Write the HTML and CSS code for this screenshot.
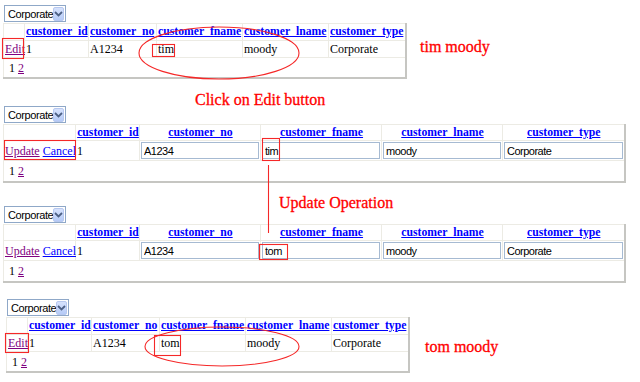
FILE: index.html
```html
<!DOCTYPE html>
<html>
<head>
<meta charset="utf-8">
<link rel="stylesheet" href="styles.css">
</head>
<body>
<div class="page">

  <div class="shot s1">
    <div class="combo"><span class="combo-text">Corporate</span><span class="combo-btn"><svg width="9" height="6" viewBox="0 0 9 6"><path d="M1 1 L4.5 4.5 L8 1" fill="none" stroke="#4d6185" stroke-width="1.8"/></svg></span></div>
    <table class="grid compact">
      <colgroup><col class="w-a"><col class="w-b"><col class="w-c"><col class="w-d"><col class="w-e"><col class="w-f"></colgroup>
      <tr class="head"><th></th><th><a href="#">customer_id</a></th><th><a href="#">customer_no</a></th><th><a href="#">customer_fname</a></th><th><a href="#">customer_lname</a></th><th><a href="#">customer_type</a></th></tr>
      <tr class="data"><td><a class="visited" href="#">Edit</a></td><td>1</td><td>A1234</td><td>tim</td><td>moody</td><td>Corporate</td></tr>
      <tr class="pager"><td colspan="6">1 <a class="visited" href="#">2</a></td></tr>
    </table>
  </div>

  <div class="shot s2">
    <div class="combo"><span class="combo-text">Corporate</span><span class="combo-btn"><svg width="9" height="6" viewBox="0 0 9 6"><path d="M1 1 L4.5 4.5 L8 1" fill="none" stroke="#4d6185" stroke-width="1.8"/></svg></span></div>
    <table class="grid wide">
      <colgroup><col class="w-a"><col class="w-b"><col class="w-c"><col class="w-d"><col class="w-e"><col class="w-f"></colgroup>
      <tr class="head"><th></th><th><a href="#">customer_id</a></th><th><a href="#">customer_no</a></th><th><a href="#">customer_fname</a></th><th><a href="#">customer_lname</a></th><th><a href="#">customer_type</a></th></tr>
      <tr class="data"><td><a class="visited" href="#">Update</a> <a href="#">Cancel</a></td><td>1</td><td><input class="field" value="A1234"></td><td><input class="field" value="tim"></td><td><input class="field" value="moody"></td><td><input class="field" value="Corporate"></td></tr>
      <tr class="pager"><td colspan="6">1 <a class="visited" href="#">2</a></td></tr>
    </table>
  </div>

  <div class="shot s3">
    <div class="combo"><span class="combo-text">Corporate</span><span class="combo-btn"><svg width="9" height="6" viewBox="0 0 9 6"><path d="M1 1 L4.5 4.5 L8 1" fill="none" stroke="#4d6185" stroke-width="1.8"/></svg></span></div>
    <table class="grid wide">
      <colgroup><col class="w-a"><col class="w-b"><col class="w-c"><col class="w-d"><col class="w-e"><col class="w-f"></colgroup>
      <tr class="head"><th></th><th><a href="#">customer_id</a></th><th><a href="#">customer_no</a></th><th><a href="#">customer_fname</a></th><th><a href="#">customer_lname</a></th><th><a href="#">customer_type</a></th></tr>
      <tr class="data"><td><a class="visited" href="#">Update</a> <a href="#">Cancel</a></td><td>1</td><td><input class="field" value="A1234"></td><td><input class="field" value="tom"></td><td><input class="field" value="moody"></td><td><input class="field" value="Corporate"></td></tr>
      <tr class="pager"><td colspan="6">1 <a class="visited" href="#">2</a></td></tr>
    </table>
  </div>

  <div class="shot s4">
    <div class="combo"><span class="combo-text">Corporate</span><span class="combo-btn"><svg width="9" height="6" viewBox="0 0 9 6"><path d="M1 1 L4.5 4.5 L8 1" fill="none" stroke="#4d6185" stroke-width="1.8"/></svg></span></div>
    <table class="grid compact">
      <colgroup><col class="w-a"><col class="w-b"><col class="w-c"><col class="w-d"><col class="w-e"><col class="w-f"></colgroup>
      <tr class="head"><th></th><th><a href="#">customer_id</a></th><th><a href="#">customer_no</a></th><th><a href="#">customer_fname</a></th><th><a href="#">customer_lname</a></th><th><a href="#">customer_type</a></th></tr>
      <tr class="data"><td><a class="visited" href="#">Edit</a></td><td>1</td><td>A1234</td><td>tom</td><td>moody</td><td>Corporate</td></tr>
      <tr class="pager"><td colspan="6">1 <a class="visited" href="#">2</a></td></tr>
    </table>
  </div>

  <svg class="marks" width="640" height="382" viewBox="0 0 640 382">
    <g fill="none" stroke="#f52828" stroke-width="1.1">
      <ellipse cx="219" cy="53" rx="80" ry="26"/>
      <rect x="2.5" y="38.5" width="21" height="20"/>
      <rect x="152.5" y="44.5" width="22" height="12"/>
      <rect x="4.5" y="140.5" width="71" height="19"/>
      <rect x="262.5" y="138.5" width="17" height="22"/>
      <line x1="268.5" y1="165" x2="268.5" y2="233"/>
      <rect x="259.5" y="244.5" width="28" height="15"/>
      <ellipse cx="222" cy="346.5" rx="77" ry="19.5"/>
      <rect x="5.5" y="333.5" width="23" height="19"/>
      <rect x="154.5" y="335.5" width="26" height="20"/>
    </g>
  </svg>

  <div class="note n-tim">tim moody</div>
  <div class="note n-click">Click on Edit button</div>
  <div class="note n-update">Update Operation</div>
  <div class="note n-tom">tom moody</div>
</div>
</body>
</html>
```

FILE: styles.css
```css
html, body {
  margin: 0;
  padding: 0;
  background: #ffffff;
}

.page {
  position: relative;
  width: 640px;
  height: 382px;
  overflow: hidden;
  font-family: "Liberation Serif", "Times New Roman", serif;
  font-size: 12px;
  color: #000;
}

.shot {
  margin-left: 3px;
}
.s1 { padding-top: 5px; }
.s2 { margin-top: 27px; }
.s3 { margin-top: 23px; }
.s4 { margin-top: 16px; margin-left: 6px; }

.combo {
  margin-left: 1px;
  margin-bottom: 1px;
  width: 62px;
  height: 17px;
  box-sizing: border-box;
  border: 1px solid #8fa8c8;
  background: #fff;
  display: flex;
  align-items: center;
  justify-content: space-between;
  font-family: "Liberation Sans", Arial, sans-serif;
  font-size: 11px;
  letter-spacing: -0.4px;
  padding-left: 3px;
}

.combo-btn {
  width: 13px;
  height: 14px;
  margin-right: 1px;
  box-sizing: border-box;
  border: 1px solid #b7c8ef;
  border-radius: 2px;
  background: linear-gradient(#d6e2fd, #b6cbf7);
  display: flex;
  align-items: center;
  justify-content: center;
}

.grid {
  border-collapse: collapse;
  table-layout: fixed;
  border-top: 1px solid #dcdad2;
  border-left: 1px solid #dcdad2;
  border-right: 2px solid #c6c6c2;
  border-bottom: 2px solid #c6c6c2;
  background: #fff;
}
.grid td, .grid th {
  border: 1px solid #ecebe4;
  padding: 0 1px;
  white-space: nowrap;
  line-height: 14px;
}
.grid th {
  font-weight: bold;
  font-size: 11.7px;
  padding: 0 0 0 1px;
  overflow: hidden;
}
.grid th a, .grid td a {
  color: #0000ff;
  text-decoration: underline;
}
.grid a.visited {
  color: #800080;
}

.compact { width: 403px; }
.compact th { text-align: left; height: 16px; }
.compact .data td { height: 16px; }
.compact .pager td { height: 19px; }
.compact .w-a { width: 21px; }
.compact .w-b { width: 64px; }
.compact .w-c { width: 68px; }
.compact .w-d { width: 86px; }
.compact .w-e { width: 86px; }
.compact .w-f { width: 77px; }

.wide { width: 621px; }
.wide th { text-align: center; height: 15px; }
.wide .data td { height: 19px; }
.wide .pager td { height: 20px; }
.wide .w-a { width: 72px; }
.wide .w-b { width: 64px; }
.wide .w-c { width: 121px; }
.wide .w-d { width: 121px; }
.wide .w-e { width: 121px; }
.wide .w-f { width: 122px; }

.grid .pager td {
  padding-left: 5px;
}

.field {
  display: block;
  width: 100%;
  height: 17px;
  box-sizing: border-box;
  margin: 0;
  border: 1px solid #a6bad2;
  padding: 0 2px;
  font-family: "Liberation Sans", Arial, sans-serif;
  font-size: 11px;
  letter-spacing: -0.5px;
  color: #000;
  background: #fff;
  outline: none;
}

.marks {
  position: absolute;
  left: 0;
  top: 0;
  pointer-events: none;
}

.note {
  position: absolute;
  font-family: "Liberation Serif", "Times New Roman", serif;
  font-size: 16px;
  line-height: 18px;
  color: #f00;
  -webkit-text-stroke: 0.3px #f00;
  white-space: nowrap;
}
.n-tim { left: 420px; top: 38px; }
.n-click { left: 195px; top: 91px; }
.n-update { left: 279px; top: 194px; }
.n-tom { left: 425px; top: 338px; }
```
